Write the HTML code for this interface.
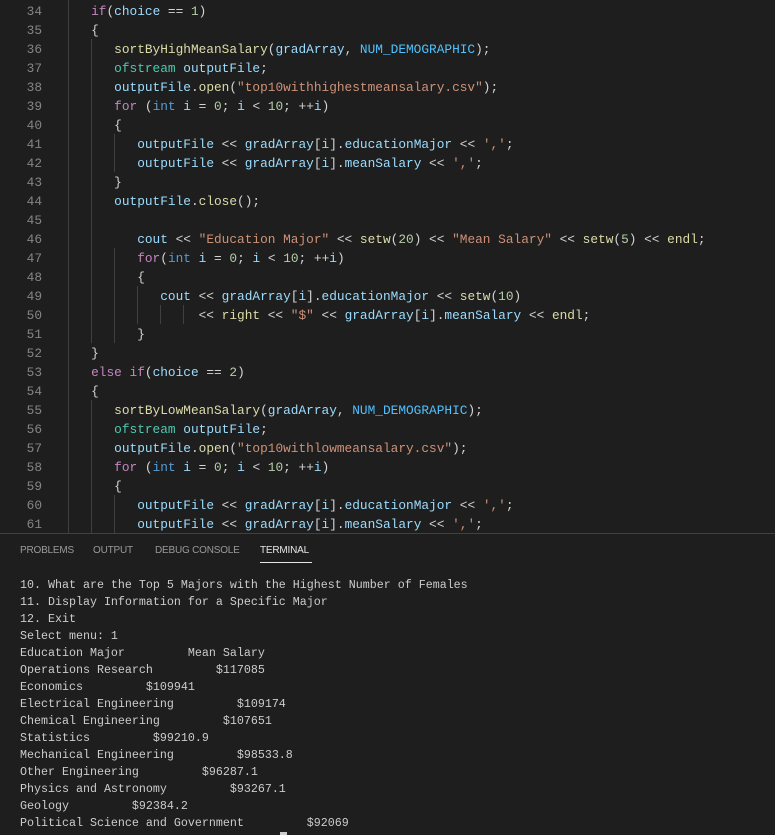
<!DOCTYPE html>
<html><head><meta charset="utf-8"><style>
body{margin:0;width:775px;height:835px;background:#1e1e1e;overflow:hidden;position:relative;font-family:"Liberation Mono",monospace}
.ln{position:absolute;left:0;top:1px;width:42px;text-align:right;color:#858585;font-size:12.8px;line-height:19px;white-space:pre}
.code{position:absolute;left:22px;top:2px;font-size:12.8px;line-height:19px;white-space:pre;color:#d4d4d4}
.g{position:absolute;width:1px;background:#404040}
.k{color:#c586c0}.b{color:#569cd6}.f{color:#dcdcaa}.v{color:#9cdcfe}.t{color:#4ec9b0}.s{color:#ce9178}.n{color:#b5cea8}.c{color:#4fc1ff}
.sep{position:absolute;left:0;top:533px;width:775px;height:1px;background:#414141}
.tabs{position:absolute;top:545px;left:20px;font-family:"Liberation Sans",sans-serif;font-size:10px;letter-spacing:-0.2px;color:#9a9a9a;white-space:nowrap}
.tabs span{position:absolute;top:0}
.term{position:absolute;left:20px;top:577px;font-size:11.67px;line-height:17px;white-space:pre;color:#cccccc}
</style></head><body>
<div class="g" style="left:68px;top:0;height:533px"></div>
<div class="g" style="left:91px;top:39px;height:304px"></div>
<div class="g" style="left:91px;top:400px;height:133px"></div>
<div class="g" style="left:114px;top:134px;height:38px"></div>
<div class="g" style="left:114px;top:248px;height:95px"></div>
<div class="g" style="left:137px;top:286px;height:38px"></div>
<div class="g" style="left:160px;top:305px;height:19px"></div>
<div class="g" style="left:183px;top:305px;height:19px"></div>
<div class="g" style="left:114px;top:495px;height:38px"></div>
<div class="ln" style="top:2px">34
35
36
37
38
39
40
41
42
43
44
45
46
47
48
49
50
51
52
53
54
55
56
57
58
59
60
61</div>
<div class="code">         <span class="k">if</span>(<span class="v">choice</span> == <span class="n">1</span>)
         {
            <span class="f">sortByHighMeanSalary</span>(<span class="v">gradArray</span>, <span class="c">NUM_DEMOGRAPHIC</span>);
            <span class="t">ofstream</span> <span class="v">outputFile</span>;
            <span class="v">outputFile</span>.<span class="f">open</span>(<span class="s">"top10withhighestmeansalary.csv"</span>);
            <span class="k">for</span> (<span class="b">int</span> <span class="v">i</span> = <span class="n">0</span>; <span class="v">i</span> &lt; <span class="n">10</span>; ++<span class="v">i</span>)
            {
               <span class="v">outputFile</span> &lt;&lt; <span class="v">gradArray</span>[<span class="v">i</span>].<span class="v">educationMajor</span> &lt;&lt; <span class="s">','</span>;
               <span class="v">outputFile</span> &lt;&lt; <span class="v">gradArray</span>[<span class="v">i</span>].<span class="v">meanSalary</span> &lt;&lt; <span class="s">','</span>;
            }
            <span class="v">outputFile</span>.<span class="f">close</span>();

               <span class="v">cout</span> &lt;&lt; <span class="s">"Education Major"</span> &lt;&lt; <span class="f">setw</span>(<span class="n">20</span>) &lt;&lt; <span class="s">"Mean Salary"</span> &lt;&lt; <span class="f">setw</span>(<span class="n">5</span>) &lt;&lt; <span class="f">endl</span>;
               <span class="k">for</span>(<span class="b">int</span> <span class="v">i</span> = <span class="n">0</span>; <span class="v">i</span> &lt; <span class="n">10</span>; ++<span class="v">i</span>)
               {
                  <span class="v">cout</span> &lt;&lt; <span class="v">gradArray</span>[<span class="v">i</span>].<span class="v">educationMajor</span> &lt;&lt; <span class="f">setw</span>(<span class="n">10</span>)
                       &lt;&lt; <span class="f">right</span> &lt;&lt; <span class="s">"$"</span> &lt;&lt; <span class="v">gradArray</span>[<span class="v">i</span>].<span class="v">meanSalary</span> &lt;&lt; <span class="f">endl</span>;
               }
         }
         <span class="k">else</span> <span class="k">if</span>(<span class="v">choice</span> == <span class="n">2</span>)
         {
            <span class="f">sortByLowMeanSalary</span>(<span class="v">gradArray</span>, <span class="c">NUM_DEMOGRAPHIC</span>);
            <span class="t">ofstream</span> <span class="v">outputFile</span>;
            <span class="v">outputFile</span>.<span class="f">open</span>(<span class="s">"top10withlowmeansalary.csv"</span>);
            <span class="k">for</span> (<span class="b">int</span> <span class="v">i</span> = <span class="n">0</span>; <span class="v">i</span> &lt; <span class="n">10</span>; ++<span class="v">i</span>)
            {
               <span class="v">outputFile</span> &lt;&lt; <span class="v">gradArray</span>[<span class="v">i</span>].<span class="v">educationMajor</span> &lt;&lt; <span class="s">','</span>;
               <span class="v">outputFile</span> &lt;&lt; <span class="v">gradArray</span>[<span class="v">i</span>].<span class="v">meanSalary</span> &lt;&lt; <span class="s">','</span>;</div>
<div class="sep"></div>
<div class="tabs"><span style="left:0">PROBLEMS</span><span style="left:73px">OUTPUT</span><span style="left:135px">DEBUG CONSOLE</span><span style="left:240px;color:#e7e7e7">TERMINAL</span></div>
<div style="position:absolute;left:260px;top:562px;width:52px;height:1px;background:#e7e7e7"></div>
<div class="term">10. What are the Top 5 Majors with the Highest Number of Females
11. Display Information for a Specific Major
12. Exit
Select menu: 1
Education Major         Mean Salary
Operations Research         $117085
Economics         $109941
Electrical Engineering         $109174
Chemical Engineering         $107651
Statistics         $99210.9
Mechanical Engineering         $98533.8
Other Engineering         $96287.1
Physics and Astronomy         $93267.1
Geology         $92384.2
Political Science and Government         $92069
</div>
<div style="position:absolute;left:280px;top:832px;width:7px;height:3px;background:#cccccc"></div>
</body></html>
